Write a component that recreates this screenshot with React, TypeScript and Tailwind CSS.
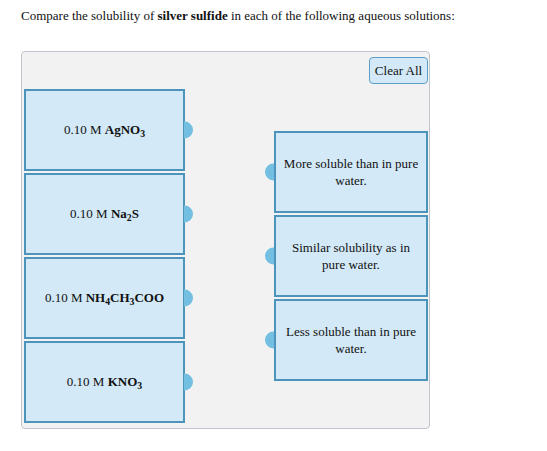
import React from 'react';

type Tile = { label: React.ReactNode };

const serif = { fontFamily: '"Liberation Serif", "Times New Roman", serif' };

const solutions: Tile[] = [
  { label: <>0.10 M <b>AgNO<sub>3</sub></b></> },
  { label: <>0.10 M <b>Na<sub>2</sub>S</b></> },
  { label: <>0.10 M <b>NH<sub>4</sub>CH<sub>3</sub>COO</b></> },
  { label: <>0.10 M <b>KNO<sub>3</sub></b></> },
];

const targets = [
  'More soluble than in pure water.',
  'Similar solubility as in pure water.',
  'Less soluble than in pure water.',
];

function Source({ label }: Tile) {
  return (
    <div className="relative flex h-[82px] items-center justify-center border-2 border-[#4d94bc] bg-[#d3e9f7] text-[13px] text-[#111]">
      <span>{label}</span>
      {/* connector nub */}
      <span className="absolute left-[calc(100%+1px)] top-1/2 h-[17px] w-[9px] -translate-y-1/2 rounded-r-full bg-[#73bfe1]" />
    </div>
  );
}

function Target({ text }: { text: string }) {
  return (
    <div className="relative flex h-[82px] items-center justify-center border-2 border-[#4d94bc] bg-[#d3e9f7] px-[6px] text-center text-[13px] leading-[17px] text-[#111]">
      <span>{text}</span>
      <span className="absolute right-[calc(100%+2px)] top-1/2 h-[17px] w-[9px] -translate-y-1/2 rounded-l-full bg-[#73bfe1]" />
    </div>
  );
}

export default function App() {
  return (
    <div className="min-h-[451px] w-[547px] bg-white pt-[8px]" style={serif}>
      <p className="ml-[21px] text-[13px] leading-[15px] text-[#111]">
        Compare the solubility of <b>silver sulfide</b> in each of the following aqueous solutions:
      </p>

      <div className="ml-[21px] mt-[28px] w-[409px] rounded-[4px] border border-[#c0c6cd] bg-[#f2f2f2] pb-[5px] pl-[2px] pr-[1px] pt-[5px]">
        <div className="flex justify-end">
          <button className="h-[27px] w-[59px] rounded-[4px] border border-[#5b9fc6] bg-[#d3e9f7] text-[13px] text-[#111]">
            Clear All
          </button>
        </div>

        <div className="mt-[5px] flex justify-between">
          <div className="flex w-[161px] flex-col gap-[2px]">
            {solutions.map((s, i) => (
              <Source key={i} label={s.label} />
            ))}
          </div>
          <div className="mt-[42px] flex w-[154px] flex-col gap-[2px]">
            {targets.map((t) => (
              <Target key={t} text={t} />
            ))}
          </div>
        </div>
      </div>
    </div>
  );
}
